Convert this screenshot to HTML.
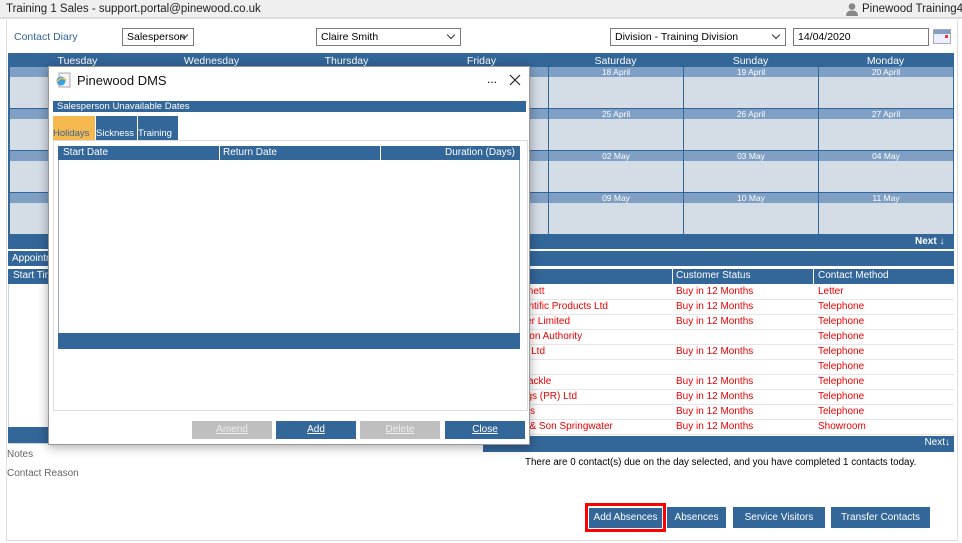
<!DOCTYPE html>
<html><head><meta charset="utf-8"><style>
*{margin:0;padding:0;box-sizing:border-box}
body{width:962px;height:543px;background:#fff;font-family:"Liberation Sans",sans-serif;font-size:11px;color:#000;position:relative;overflow:hidden}
.a{position:absolute;white-space:nowrap}
.blue{background:#336699;color:#fff}
.sel{position:absolute;border:1px solid #7a7a7a;background:#fff;height:18px;font-size:10.5px;padding:2px 4px;line-height:12px;white-space:nowrap}
.sel:after{content:"";position:absolute;right:6px;top:3px;width:5px;height:5px;border-right:1.3px solid #333;border-bottom:1.3px solid #333;transform:rotate(45deg)}
.dh{position:absolute;top:55px;color:#fff;font-size:10.5px;width:135px;text-align:center}
.cell{position:absolute;background:#d4dce6;width:134px;height:41px}
.cell .d{background:#7f9fc4;height:10px;color:#fff;font-size:8.5px;text-align:center;line-height:10px}
.row{position:absolute;left:483px;width:471px;height:15px;border-bottom:1px solid #e6e6e6;color:#e00;font-size:10px;line-height:14px}
.row span{position:absolute;white-space:nowrap}
.btn{position:absolute;height:18px;background:#336699;color:#fff;font-size:10px;text-align:center;line-height:18px;white-space:nowrap}
</style></head><body>
<div class="a" style="left:0;top:0;width:962px;height:19px;background:#efefef;border-bottom:2px solid #ddd"></div>
<div class="a" style="left:6px;top:3px;font-size:11.5px;color:#222">Training 1 Sales - support.portal@pinewood.co.uk</div>
<svg class="a" style="left:845px;top:2px" width="14" height="14" viewBox="0 0 14 14"><circle cx="7" cy="4.5" r="3.3" fill="#888"/><path d="M1 14 Q1 8.5 7 8.5 Q13 8.5 13 14Z" fill="#888"/></svg>
<div class="a" style="left:862px;top:3px;font-size:11.5px;color:#222">Pinewood Training4</div>
<div class="a" style="left:6px;top:20px;width:952px;height:521px;border:1px solid #ddd;border-top:none"></div>

<div class="a" style="left:14px;top:31px;color:#336699;font-size:10.5px">Contact Diary</div>
<div class="sel" style="left:122px;top:28px;width:72px">Salesperson</div>
<div class="sel" style="left:316px;top:28px;width:145px">Claire Smith</div>
<div class="sel" style="left:610px;top:28px;width:176px">Division - Training Division</div>
<div class="a" style="left:793px;top:28px;width:136px;height:18px;border:1px solid #7a7a7a;font-size:10.5px;padding:2px 4px;line-height:12px">14/04/2020</div>
<div class="a" style="left:933px;top:29px;width:18px;height:15px;border:1px solid #aab;background:linear-gradient(#7f9fc4 0 4px,#eef 4px)"><div class="a" style="right:2px;top:5px;width:3px;height:3px;background:#e33"></div></div>

<div class="a blue" style="left:8px;top:53px;width:946px;height:196px"></div>
<div class="dh" style="left:10px">Tuesday</div><div class="dh" style="left:144px">Wednesday</div><div class="dh" style="left:279px">Thursday</div><div class="dh" style="left:414px">Friday</div><div class="dh" style="left:548px">Saturday</div><div class="dh" style="left:683px">Sunday</div><div class="dh" style="left:818px">Monday</div>
<div class="cell" style="left:10px;top:67px"><div class="d"></div></div>
<div class="cell" style="left:10px;top:109px"><div class="d"></div></div>
<div class="cell" style="left:10px;top:151px"><div class="d"></div></div>
<div class="cell" style="left:10px;top:193px"><div class="d"></div></div>
<div class="cell" style="left:414px;top:67px"><div class="d"></div></div>
<div class="cell" style="left:414px;top:109px"><div class="d"></div></div>
<div class="cell" style="left:414px;top:151px"><div class="d"></div></div>
<div class="cell" style="left:414px;top:193px"><div class="d"></div></div>
<div class="cell" style="left:549px;top:67px"><div class="d">18 April</div></div>
<div class="cell" style="left:684px;top:67px"><div class="d">19 April</div></div>
<div class="cell" style="left:819px;top:67px"><div class="d">20 April</div></div>
<div class="cell" style="left:549px;top:109px"><div class="d">25 April</div></div>
<div class="cell" style="left:684px;top:109px"><div class="d">26 April</div></div>
<div class="cell" style="left:819px;top:109px"><div class="d">27 April</div></div>
<div class="cell" style="left:549px;top:151px"><div class="d">02 May</div></div>
<div class="cell" style="left:684px;top:151px"><div class="d">03 May</div></div>
<div class="cell" style="left:819px;top:151px"><div class="d">04 May</div></div>
<div class="cell" style="left:549px;top:193px"><div class="d">09 May</div></div>
<div class="cell" style="left:684px;top:193px"><div class="d">10 May</div></div>
<div class="cell" style="left:819px;top:193px"><div class="d">11 May</div></div>
<div class="a" style="left:915px;top:236px;color:#fff;font-weight:bold;font-size:10px">Next &#8595;</div>

<div class="a blue" style="left:8px;top:251px;width:946px;height:15px;padding:2px 4px;font-size:10px">Appointments</div>
<div class="a" style="left:8px;top:269px;width:474px;height:175px;border:1px solid #c8d4e0"></div>
<div class="a blue" style="left:8px;top:269px;width:474px;height:15px;padding:1px 5px;font-size:10px">Start Time</div>
<div class="a blue" style="left:8px;top:427px;width:474px;height:16px"></div>
<div class="a blue" style="left:483px;top:269px;width:471px;height:15px;font-size:10px"><span class="a" style="left:4px;top:1px">Name</span><span class="a" style="left:189px;top:0;width:1px;height:15px;background:#fff"></span><span class="a" style="left:193px;top:1px">Customer Status</span><span class="a" style="left:330px;top:0;width:1px;height:15px;background:#fff"></span><span class="a" style="left:335px;top:1px">Contact Method</span></div>
<div class="row" style="top:285px"><span style="left:27px">Bennett</span><span style="left:193px">Buy in 12 Months</span><span style="left:335px">Letter</span></div>
<div class="row" style="top:300px"><span style="left:26px">Scientific Products Ltd</span><span style="left:193px">Buy in 12 Months</span><span style="left:335px">Telephone</span></div>
<div class="row" style="top:315px"><span style="left:27px">Fuller Limited</span><span style="left:193px">Buy in 12 Months</span><span style="left:335px">Telephone</span></div>
<div class="row" style="top:330px"><span style="left:22px">Aviation Authority</span><span style="left:335px">Telephone</span></div>
<div class="row" style="top:345px"><span style="left:27px">Hire Ltd</span><span style="left:193px">Buy in 12 Months</span><span style="left:335px">Telephone</span></div>
<div class="row" style="top:360px"><span style="left:27px">Ford</span><span style="left:335px">Telephone</span></div>
<div class="row" style="top:375px"><span style="left:40px">Tackle</span><span style="left:193px">Buy in 12 Months</span><span style="left:335px">Telephone</span></div>
<div class="row" style="top:390px"><span style="left:24px">Things (PR) Ltd</span><span style="left:193px">Buy in 12 Months</span><span style="left:335px">Telephone</span></div>
<div class="row" style="top:405px"><span style="left:27px">Signs</span><span style="left:193px">Buy in 12 Months</span><span style="left:335px">Telephone</span></div>
<div class="row" style="top:420px"><span style="left:17px">Jones &amp; Son Springwater</span><span style="left:193px">Buy in 12 Months</span><span style="left:335px">Showroom</span></div>
<div class="a blue" style="left:483px;top:436px;width:471px;height:16px"><span class="a" style="right:4px;top:1px;font-size:10px">Next&#8595;</span></div>

<div class="a" style="left:7px;top:449px;color:#666;font-size:10px">Notes</div>
<div class="a" style="left:7px;top:468px;color:#666;font-size:10px">Contact Reason</div>
<div class="a" style="left:525px;top:457px;font-size:9.8px">There are 0 contact(s) due on the day selected, and you have completed 1 contacts today.</div>

<div class="a" style="left:585px;top:503px;width:81px;height:29px;border:3px solid #f00"></div>
<div class="btn" style="left:589px;top:508px;width:73px;height:20px;line-height:20px">Add Absences</div>
<div class="btn" style="left:667px;top:507px;width:59px;height:21px;line-height:21px">Absences</div>
<div class="btn" style="left:733px;top:507px;width:92px;height:21px;line-height:21px">Service Visitors</div>
<div class="btn" style="left:831px;top:507px;width:99px;height:21px;line-height:21px">Transfer Contacts</div>

<!-- modal -->
<div class="a" style="left:48px;top:66px;width:482px;height:379px;background:#fff;border:1px solid #999;box-shadow:0 2px 10px rgba(0,0,0,.35)"></div>
<svg class="a" style="left:55px;top:72px" width="16" height="16" viewBox="0 0 16 16"><rect x="4" y="1" width="11" height="14" fill="#f4f4f4" stroke="#aaa"/><circle cx="6" cy="9" r="4.5" fill="#3aa0e0"/><path d="M2 10 Q6 4 11 8" stroke="#f0c040" stroke-width="1.5" fill="none"/></svg>
<div class="a" style="left:77px;top:73px;font-size:13px;color:#111">Pinewood DMS</div>
<div class="a" style="left:487px;top:72px;font-size:12px">...</div>
<svg class="a" style="left:509px;top:74px" width="12" height="12" viewBox="0 0 12 12"><path d="M1 1L11 11M11 1L1 11" stroke="#222" stroke-width="1.2"/></svg>
<div class="a blue" style="left:53px;top:101px;width:473px;height:11px;font-size:9.5px;line-height:11px;padding-left:4px">Salesperson Unavailable Dates</div>
<div class="a" style="left:53px;top:116px;width:42px;height:24px;background:#f5b94f;color:#336699;font-size:9.5px;padding-top:12px">Holidays</div>
<div class="a blue" style="left:96px;top:116px;width:41px;height:24px;font-size:9.5px;padding-top:12px">Sickness</div>
<div class="a blue" style="left:138px;top:116px;width:40px;height:24px;font-size:9.5px;padding-top:12px">Training</div>
<div class="a" style="left:53px;top:140px;width:475px;height:271px;border:1px solid #ddd"></div>
<div class="a" style="left:58px;top:146px;width:462px;height:203px;border:1px solid #9ab"></div>
<div class="a blue" style="left:58px;top:146px;width:462px;height:14px;font-size:10px"><span class="a" style="left:5px;top:1px">Start Date</span><span class="a" style="left:161px;top:0;width:1px;height:14px;background:#fff"></span><span class="a" style="left:165px;top:1px">Return Date</span><span class="a" style="left:322px;top:0;width:1px;height:14px;background:#fff"></span><span class="a" style="right:5px;top:1px">Duration (Days)</span></div>
<div class="a blue" style="left:58px;top:333px;width:462px;height:16px"></div>
<div class="btn" style="left:192px;top:421px;width:80px;background:#bfbfbf;color:#eee;text-decoration:underline">Amend</div>
<div class="btn" style="left:276px;top:421px;width:80px;text-decoration:underline">Add</div>
<div class="btn" style="left:360px;top:421px;width:80px;background:#bfbfbf;color:#eee;text-decoration:underline">Delete</div>
<div class="btn" style="left:445px;top:421px;width:80px;text-decoration:underline">Close</div>
</body></html>
